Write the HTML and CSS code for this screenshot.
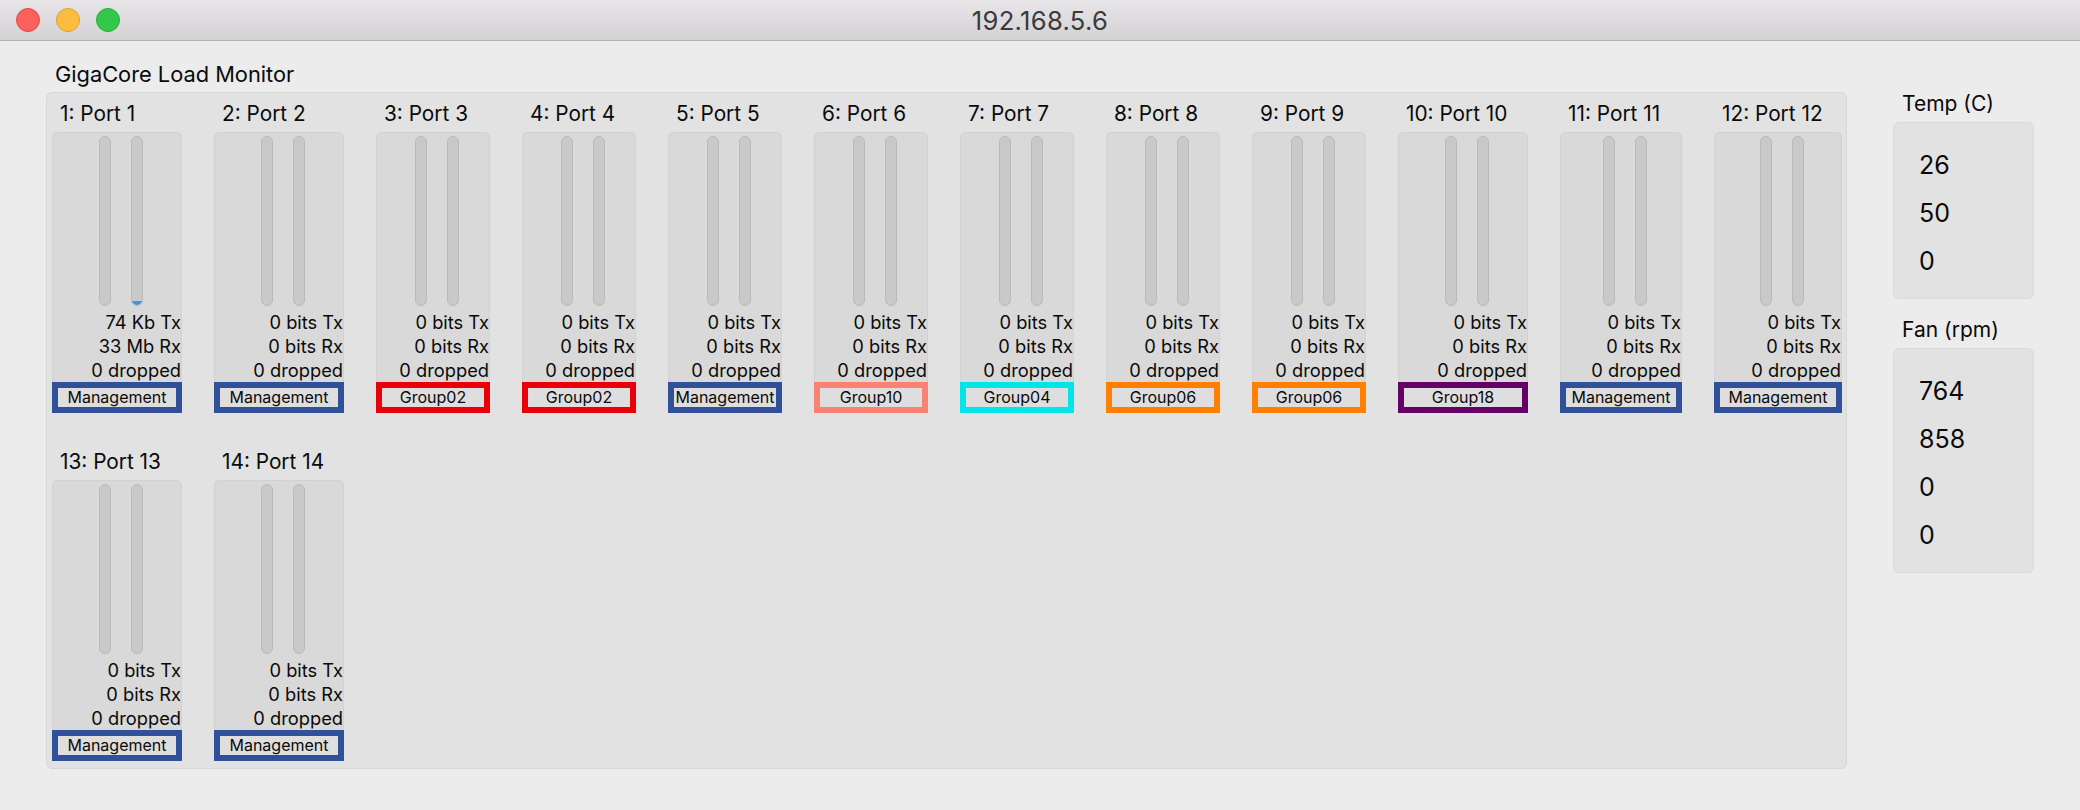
FILE: index.html
```html
<!DOCTYPE html>
<html>
<head>
<meta charset="utf-8">
<title>192.168.5.6</title>
<link rel="stylesheet" href="styles.css">
</head>
<body>
<div class="titlebar">
  <div class="lights">
    <span class="light red"></span>
    <span class="light yellow"></span>
    <span class="light green"></span>
  </div>
  <div class="title">192.168.5.6</div>
  <div></div>
</div>
<div class="main">
  <div class="left">
    <div class="heading">GigaCore Load Monitor</div>
    <div class="panel">
      <div class="cell">
        <div class="plabel">1: Port 1</div>
        <div class="box">
          <div class="bars"><div class="bar"></div><div class="bar"><div class="fill"></div></div></div>
          <div class="stats"><div>74 Kb Tx</div><div>33 Mb Rx</div><div>0 dropped</div></div>
          <div class="frame g-mgmt"><div class="btn">Management</div></div>
        </div>
      </div>
      <div class="cell">
        <div class="plabel">2: Port 2</div>
        <div class="box">
          <div class="bars"><div class="bar"></div><div class="bar"></div></div>
          <div class="stats"><div>0 bits Tx</div><div>0 bits Rx</div><div>0 dropped</div></div>
          <div class="frame g-mgmt"><div class="btn">Management</div></div>
        </div>
      </div>
      <div class="cell">
        <div class="plabel">3: Port 3</div>
        <div class="box">
          <div class="bars"><div class="bar"></div><div class="bar"></div></div>
          <div class="stats"><div>0 bits Tx</div><div>0 bits Rx</div><div>0 dropped</div></div>
          <div class="frame g-02"><div class="btn">Group02</div></div>
        </div>
      </div>
      <div class="cell">
        <div class="plabel">4: Port 4</div>
        <div class="box">
          <div class="bars"><div class="bar"></div><div class="bar"></div></div>
          <div class="stats"><div>0 bits Tx</div><div>0 bits Rx</div><div>0 dropped</div></div>
          <div class="frame g-02"><div class="btn">Group02</div></div>
        </div>
      </div>
      <div class="cell">
        <div class="plabel">5: Port 5</div>
        <div class="box">
          <div class="bars"><div class="bar"></div><div class="bar"></div></div>
          <div class="stats"><div>0 bits Tx</div><div>0 bits Rx</div><div>0 dropped</div></div>
          <div class="frame g-mgmt"><div class="btn">Management</div></div>
        </div>
      </div>
      <div class="cell">
        <div class="plabel">6: Port 6</div>
        <div class="box">
          <div class="bars"><div class="bar"></div><div class="bar"></div></div>
          <div class="stats"><div>0 bits Tx</div><div>0 bits Rx</div><div>0 dropped</div></div>
          <div class="frame g-10"><div class="btn">Group10</div></div>
        </div>
      </div>
      <div class="cell">
        <div class="plabel">7: Port 7</div>
        <div class="box">
          <div class="bars"><div class="bar"></div><div class="bar"></div></div>
          <div class="stats"><div>0 bits Tx</div><div>0 bits Rx</div><div>0 dropped</div></div>
          <div class="frame g-04"><div class="btn">Group04</div></div>
        </div>
      </div>
      <div class="cell">
        <div class="plabel">8: Port 8</div>
        <div class="box">
          <div class="bars"><div class="bar"></div><div class="bar"></div></div>
          <div class="stats"><div>0 bits Tx</div><div>0 bits Rx</div><div>0 dropped</div></div>
          <div class="frame g-06"><div class="btn">Group06</div></div>
        </div>
      </div>
      <div class="cell">
        <div class="plabel">9: Port 9</div>
        <div class="box">
          <div class="bars"><div class="bar"></div><div class="bar"></div></div>
          <div class="stats"><div>0 bits Tx</div><div>0 bits Rx</div><div>0 dropped</div></div>
          <div class="frame g-06"><div class="btn">Group06</div></div>
        </div>
      </div>
      <div class="cell">
        <div class="plabel">10: Port 10</div>
        <div class="box">
          <div class="bars"><div class="bar"></div><div class="bar"></div></div>
          <div class="stats"><div>0 bits Tx</div><div>0 bits Rx</div><div>0 dropped</div></div>
          <div class="frame g-18"><div class="btn">Group18</div></div>
        </div>
      </div>
      <div class="cell">
        <div class="plabel">11: Port 11</div>
        <div class="box">
          <div class="bars"><div class="bar"></div><div class="bar"></div></div>
          <div class="stats"><div>0 bits Tx</div><div>0 bits Rx</div><div>0 dropped</div></div>
          <div class="frame g-mgmt"><div class="btn">Management</div></div>
        </div>
      </div>
      <div class="cell">
        <div class="plabel">12: Port 12</div>
        <div class="box">
          <div class="bars"><div class="bar"></div><div class="bar"></div></div>
          <div class="stats"><div>0 bits Tx</div><div>0 bits Rx</div><div>0 dropped</div></div>
          <div class="frame g-mgmt"><div class="btn">Management</div></div>
        </div>
      </div>
      <div class="cell">
        <div class="plabel">13: Port 13</div>
        <div class="box">
          <div class="bars"><div class="bar"></div><div class="bar"></div></div>
          <div class="stats"><div>0 bits Tx</div><div>0 bits Rx</div><div>0 dropped</div></div>
          <div class="frame g-mgmt"><div class="btn">Management</div></div>
        </div>
      </div>
      <div class="cell">
        <div class="plabel">14: Port 14</div>
        <div class="box">
          <div class="bars"><div class="bar"></div><div class="bar"></div></div>
          <div class="stats"><div>0 bits Tx</div><div>0 bits Rx</div><div>0 dropped</div></div>
          <div class="frame g-mgmt"><div class="btn">Management</div></div>
        </div>
      </div>
    </div>
  </div>
  <div class="right">
    <div class="slabel">Temp (C)</div>
    <div class="sbox">
      <div>26</div><div>50</div><div>0</div>
    </div>
    <div class="slabel fan">Fan (rpm)</div>
    <div class="sbox">
      <div>764</div><div>858</div><div>0</div><div>0</div>
    </div>
  </div>
</div>
</body>
</html>
```

FILE: styles.css
```css
html, body {
  margin: 0;
  padding: 0;
}
body {
  width: 2080px;
  height: 810px;
  background: #ececec;
  font-family: Inter, "Liberation Sans", sans-serif;
  color: #0a0a0a;
  overflow: hidden;
}
.titlebar {
  height: 40px;
  border-bottom: 1px solid #b4b2b4;
  background: linear-gradient(#e8e6e8, #d3d1d3);
  display: grid;
  grid-template-columns: 1fr auto 1fr;
  align-items: center;
}
.lights {
  display: flex;
  gap: 16px;
  padding-left: 16px;
}
.light {
  width: 22px;
  height: 22px;
  border-radius: 50%;
  border: 1px solid;
}
.red { background: #fc605c; border-color: #de4a45; }
.yellow { background: #fdbc40; border-color: #dea035; }
.green { background: #34c84a; border-color: #2aad38; }
.title {
  font-size: 25.6px;
  color: #3a3a3a;
  letter-spacing: 0.3px;
}
.main {
  display: flex;
  align-items: flex-start;
  padding: 20px 0 0 46px;
  gap: 46px;
}
.left {
  display: flex;
  flex-direction: column;
  align-items: flex-start;
}
.heading {
  font-size: 21.8px;
  line-height: 26px;
  height: 26px;
  margin: 0 0 5px 9px;
}
.panel {
  background: #e2e2e2;
  border: 1px solid #d7d7d7;
  border-radius: 6px;
  padding: 3px 4px 7px 5px;
  display: grid;
  grid-template-columns: 130px 130px 114px 114px 114px 114px 114px 114px 114px 130px 122px 128px;
  column-gap: 32px;
  row-gap: 31px;
}
.cell {
  display: flex;
  flex-direction: column;
}
.plabel {
  font-size: 20.8px;
  line-height: 23px;
  height: 23px;
  padding: 6px 0 0 8px;
  margin-bottom: 7px;
  white-space: nowrap;
}
.box {
  background: #d9d9d9;
  border-radius: 6px 6px 0 0;
  box-shadow: inset 0 0 0 1px #d2d2d2;
  padding-top: 4px;
  display: flex;
  flex-direction: column;
}
.bars {
  height: 170px;
  padding-left: 8px;
  display: flex;
  justify-content: center;
  gap: 20px;
}
.bar {
  width: 10px;
  height: 168px;
  border: 1px solid #bababa;
  background: #c9c9c9;
  border-radius: 6px;
  display: flex;
  flex-direction: column;
  justify-content: flex-end;
  overflow: hidden;
}
.fill {
  height: 4px;
  background: #3f93ee;
  border-radius: 0 0 6px 6px;
}
.stats {
  margin-top: 4px;
  font-size: 18.3px;
  line-height: 24px;
  text-align: right;
  padding-right: 1px;
  white-space: nowrap;
}
.frame {
  border: 6px solid;
  height: 19px;
}
.btn {
  height: 19px;
  background: #dedede;
  font-size: 16px;
  line-height: 19px;
  text-align: center;
  white-space: nowrap;
  overflow: hidden;
}
.g-mgmt { border-color: #31509a; }
.g-02 { border-color: #ea0009; }
.g-10 { border-color: #f98272; }
.g-04 { border-color: #00e6e8; }
.g-06 { border-color: #ff8000; }
.g-18 { border-color: #650066; }
.right {
  display: flex;
  flex-direction: column;
  padding-top: 30px;
}
.slabel {
  font-size: 21px;
  line-height: 26px;
  height: 26px;
  margin: 0 0 5px 9px;
}
.slabel.fan {
  margin-top: 18px;
}
.sbox {
  width: 114px;
  background: #e2e2e2;
  border: 1px solid #dadada;
  border-radius: 6px;
  padding: 18px 0 13px 25px;
  font-size: 25px;
  line-height: 48px;
}
```
